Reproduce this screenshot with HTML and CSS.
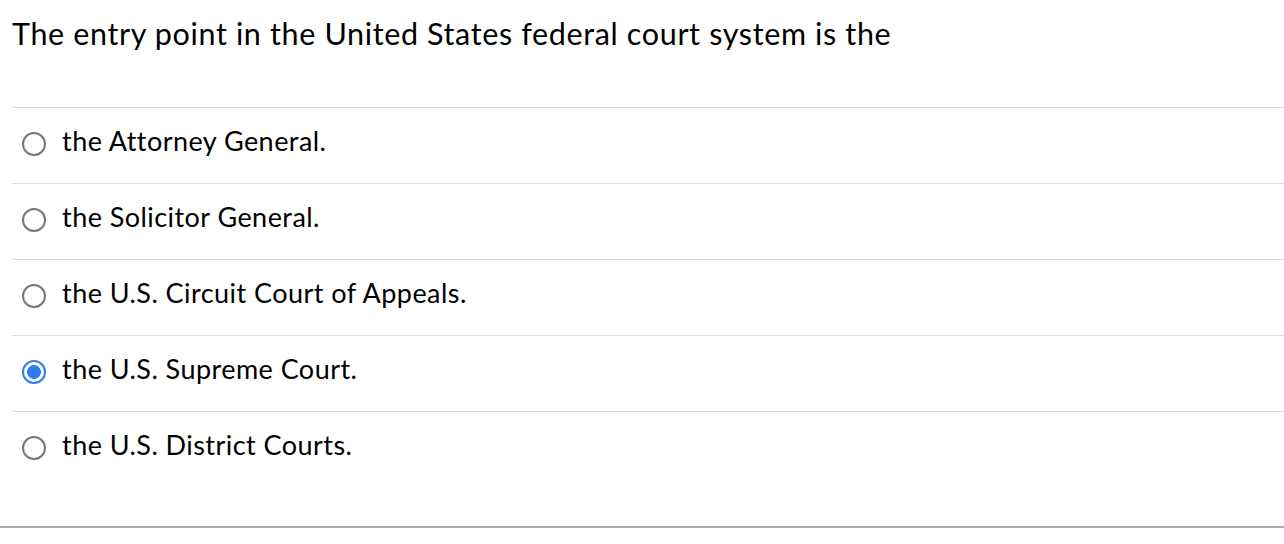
FILE: index.html
```html
<!DOCTYPE html>
<html>
<head>
<meta charset="utf-8">
<link rel="stylesheet" href="styles.css">
</head>
<body>
<div class="quiz">
  <div class="question">The entry point in the United States federal court system is the</div>
  <div class="answers">
    <label class="answer"><span class="radio"></span><span class="label">the Attorney General.</span></label>
    <label class="answer"><span class="radio"></span><span class="label">the Solicitor General.</span></label>
    <label class="answer"><span class="radio"></span><span class="label">the U.S. Circuit Court of Appeals.</span></label>
    <label class="answer"><span class="radio checked"></span><span class="label">the U.S. Supreme Court.</span></label>
    <label class="answer"><span class="radio"></span><span class="label">the U.S. District Courts.</span></label>
  </div>
</div>
<div class="footer-rule"></div>
</body>
</html>
```

FILE: styles.css
```css
html, body {
  margin: 0;
  padding: 0;
  background: #fff;
}
body {
  font-family: Lato, "Noto Sans", sans-serif;
  color: #000;
}
.quiz {
  padding: 0 0 39px 12px;
}
.question {
  font-size: 30.5px;
  letter-spacing: 0.64px;
  line-height: 36px;
  padding-top: 15px;
  box-sizing: border-box;
  height: 107px;
}
.answers {
  display: flex;
  flex-direction: column;
}
.answer {
  display: flex;
  align-items: center;
  border-top: 1px solid #dcdcdc;
  font-size: 27px;
  letter-spacing: 0.45px;
  padding: 0 0 3px 10px;
  box-sizing: content-box;
  height: 72px;
  gap: 16px;
}
.label {
  margin-bottom: 7px;
}
.radio {
  width: 20px;
  height: 20px;
  border: 2px solid #777;
  border-radius: 50%;
  box-sizing: content-box;
  flex: none;
}
.radio.checked {
  border-color: #2f7df6;
  background: radial-gradient(circle, #2f7df6 0 6.6px, #fff 7.2px);
}
.footer-rule {
  height: 2px;
  background: #a8a8a8;
}
```
